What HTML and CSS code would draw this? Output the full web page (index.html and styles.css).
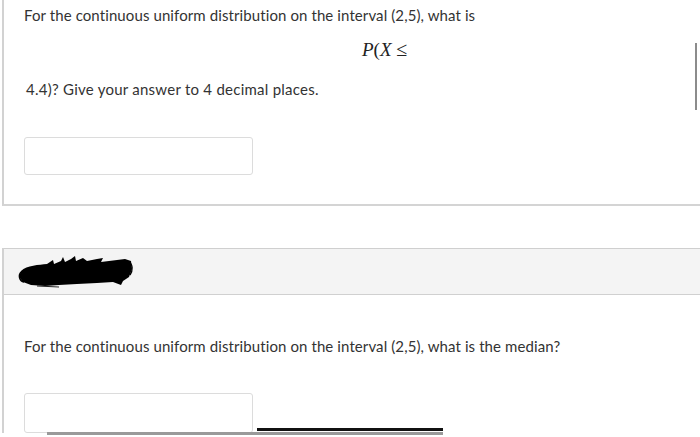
FILE: index.html
```html
<!DOCTYPE html>
<html>
<head>
<meta charset="utf-8">
<link rel="stylesheet" href="styles.css">
</head>
<body>
<div class="page">
  <section class="card card-top">
    <p class="q q1">For the continuous uniform distribution on the interval (2,5), what is</p>
    <div class="math"><i>P</i>(<i>X</i> <span class="le">≤</span></div>
    <p class="q q2">4.4)? Give your answer to 4 decimal places.</p>
    <div class="answer"></div>
  </section>
  <div class="scrollmark"></div>
  <section class="card card-second">
    <div class="card-head">
      <svg class="scribble" width="118" height="34" viewBox="0 0 118 34">
        <path d="M4 16 C10 10 22 10 30 9 L36 5 L37 9 L44 6 L46 2 L48 7 L54 4 L58 1 L59 6 L66 3 L70 6 L80 4 L86 3 L84 7 L100 5 L108 4 L114 6 L115 14 L112 22 L106 26 L104 30 L96 27 L80 28 L60 29 L42 30 L28 31 L14 30 L6 27 L2 22 Z" fill="#000"/>
        <path d="M4 17 C1 20 2 26 7 27" stroke="#000" stroke-width="1.3" fill="none"/>
        <path d="M112 7 C116 9 116 16 113 20" stroke="#000" stroke-width="1.3" fill="none"/>
        <path d="M20 31 L42 32" stroke="#222" stroke-width="1" fill="none"/>
      </svg>
    </div>
    <div class="card-body">
      <p class="q q3">For the continuous uniform distribution on the interval (2,5), what is the median?</p>
      <div class="answer"></div>
    </div>
  </section>
  <div class="bar-gray"></div>
  <div class="bar-black"></div>
</div>
</body>
</html>
```

FILE: styles.css
```css
html, body {
  margin: 0;
  padding: 0;
  background: #fff;
}
.page {
  position: relative;
  width: 700px;
  height: 437px;
  overflow: hidden;
  font-family: Lato, "Open Sans", "Liberation Sans", sans-serif;
  color: #333;
}
.card {
  margin-left: 2px;
  border-left: 2px solid #d2d2d2;
}
.card-top {
  display: flex;
  flex-direction: column;
  padding: 5px 0 0 0;
  height: 199px;
  border-bottom: 2px solid #d4d4d4;
}
.q {
  margin: 0;
  font-size: 15px;
  line-height: 20px;
  letter-spacing: 0.1px;
  white-space: nowrap;
}
.q1 {
  padding-left: 20px;
}
.math {
  margin-top: 13px;
  padding-left: 358px;
  font-family: "Liberation Serif", "Times New Roman", serif;
  font-size: 19px;
  line-height: 22px;
  color: #222;
}
.le {
  font-size: 20px;
}
.q2 {
  margin-top: 18px;
  padding-left: 22px;
  letter-spacing: 0.25px;
}
.answer {
  margin-left: 20px;
  width: 227px;
  height: 36px;
  border: 1px solid #dcdcdc;
  border-radius: 3px;
  background: #fff;
}
.card-top .answer {
  margin-top: 38px;
}
.scrollmark {
  position: absolute;
  left: 695px;
  top: 43px;
  width: 2px;
  height: 67px;
  background: #8c8c8c;
}
.card-second {
  margin-top: 42px;
}
.card-head {
  height: 45px;
  background: #f4f4f4;
  border-top: 1px solid #cfcfcf;
  border-bottom: 1px solid #d0d0d0;
  display: flex;
  align-items: center;
  padding-left: 13px;
}
.scribble {
  display: block;
}
.card-body {
  display: flex;
  flex-direction: column;
  padding-top: 41px;
}
.q3 {
  padding-left: 20px;
}
.card-body .answer {
  margin-top: 37px;
  height: 38px;
}
.bar-gray {
  position: absolute;
  left: 47px;
  top: 432px;
  width: 396px;
  height: 3px;
  background: #9a9a9a;
}
.bar-black {
  position: absolute;
  left: 257px;
  top: 428px;
  width: 186px;
  height: 3px;
  background: #111;
}
```
